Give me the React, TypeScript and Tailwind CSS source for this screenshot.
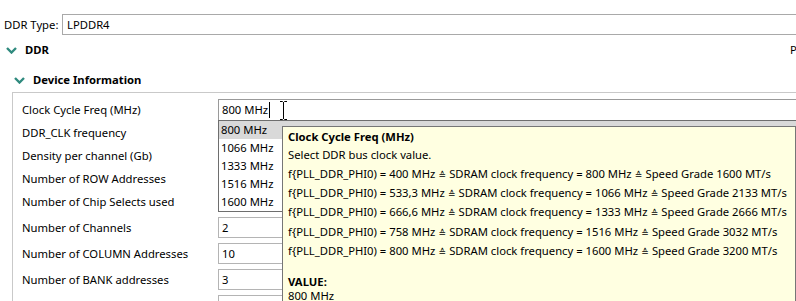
import React from "react";

function Chevron({ className }: { className?: string }) {
  return (
    <svg width="11" height="7" viewBox="0 0 11 7" className={className}>
      <path d="M1 1 L5.5 5.5 L10 1" fill="none" stroke="#2f8a7e" strokeWidth="2.4" />
    </svg>
  );
}

function IBeam() {
  return (
    <svg width="9" height="19" viewBox="0 0 9 19" className="block">
      <path d="M1 0.5 H3.5 M5.5 0.5 H8 M4.5 1 V18 M1 18.5 H3.5 M5.5 18.5 H8 M3.5 0.5 L4.5 1.5 L5.5 0.5 M3.5 18.5 L4.5 17.5 L5.5 18.5" fill="none" stroke="#000" strokeWidth="1" />
    </svg>
  );
}

function Eq() {
  return <span className="inline-block w-[8px] text-center text-[9px] font-['DejaVu_Sans',sans-serif]">{"\u2259"}</span>;
}

const hiddenRows = [
  "DDR_CLK frequency",
  "Density per channel (Gb)",
  "Number of ROW Addresses",
  "Number of Chip Selects used",
];

const inputRows: [string, string][] = [
  ["Number of Channels", "2"],
  ["Number of COLUMN Addresses", "10"],
  ["Number of BANK addresses", "3"],
  ["Number of BANKS", "8"],
];

const options = ["800 MHz", "1066 MHz", "1333 MHz", "1516 MHz", "1600 MHz"];

const tipLines: [string, string, string][] = [
  ["400", "800", "1600"],
  ["533,3", "1066", "2133"],
  ["666,6", "1333", "2666"],
  ["758", "1516", "3032"],
  ["800", "1600", "3200"],
];

export default function App() {
  return (
    <div className="relative w-[796px] h-[301px] overflow-hidden bg-white text-[11.25px] text-black font-['Noto_Sans',sans-serif] leading-none whitespace-nowrap">
      {/* DDR Type row */}
      <div className="flex items-center h-[21px] mt-[14px]">
        <span className="w-[62px] pl-[4px] shrink-0">DDR Type:</span>
        <div className="flex-1 h-[21px] border border-r-0 border-[#a9a9a9] flex items-center pl-[4px]">LPDDR4</div>
      </div>

      {/* DDR header */}
      <div className="flex items-center h-[16px] mt-[7px]">
        <Chevron className="ml-[6px] mr-[8px]" />
        <span className="font-bold">DDR</span>
        <div className="flex-1" />
        <div className="w-[6px] shrink-0">Properties</div>
      </div>

      {/* Device Information header */}
      <div className="flex items-center h-[16px] mt-[14px]">
        <Chevron className="ml-[14px] mr-[8px]" />
        <span className="font-bold">Device Information</span>
      </div>

      {/* Group box */}
      <div className="ml-[12px] mt-[4px] border-l border-t border-[#c9c9c9] pt-[6px] pl-[9px]">
        <div className="flex items-center h-[22px]">
          <span className="w-[196px] shrink-0">Clock Cycle Freq (MHz)</span>
          <div className="flex-1 h-[22px] border border-r-0 border-[#9a9a9a] flex items-center pl-[3px]">
            <span>800 MHz</span>
            <span className="w-px h-[16px] bg-black ml-px" />
          </div>
        </div>
        {hiddenRows.map((l) => (
          <div key={l} className="flex items-center h-[23px]">
            <span className="w-[196px] shrink-0">{l}</span>
          </div>
        ))}
        <div className="flex flex-col gap-[5px] mt-[4px]">
          {inputRows.map(([l, v]) => (
            <div key={l} className="flex items-center h-[21px]">
              <span className="w-[196px] shrink-0">{l}</span>
              <div className="flex-1 h-[21px] border border-r-0 border-[#b4b4b4] flex items-center pl-[3px]">{v}</div>
            </div>
          ))}
        </div>
      </div>

      {/* I-beam mouse cursor */}
      <div className="absolute left-[279px] top-[101px]">
        <IBeam />
      </div>

      {/* Dropdown list */}
      <div className="absolute left-[218px] top-[120px] w-[600px] h-[92px] border border-[#6e6e6e] bg-white">
        {options.map((o, i) => (
          <div key={o} className={"h-[18px] flex items-center pl-[2px] " + (i === 0 ? "bg-[#d9d9d9]" : "")}>
            {o}
          </div>
        ))}
      </div>

      {/* Tooltip */}
      <div className="absolute left-[282px] top-[126px] w-[514px] h-[190px] border border-[#767676] bg-[#ffffe1] pl-[5px] pt-[1px]">
        <div className="leading-[18.33px] font-bold">Clock Cycle Freq (MHz)</div>
        <div className="leading-[18.33px]">Select DDR bus clock value.</div>
        {tipLines.map(([a, b, c]) => (
          <div key={a + b} className="leading-[18.33px]">
            f{"{"}PLL_DDR_PHI0) = {a} MHz <Eq /> SDRAM clock frequency = {b} MHz <Eq /> Speed Grade {c} MT/s
          </div>
        ))}
        <div className="mt-[14px] leading-[14px] font-bold">VALUE:</div>
        <div className="leading-[14px]">800 MHz</div>
      </div>
    </div>
  );
}
